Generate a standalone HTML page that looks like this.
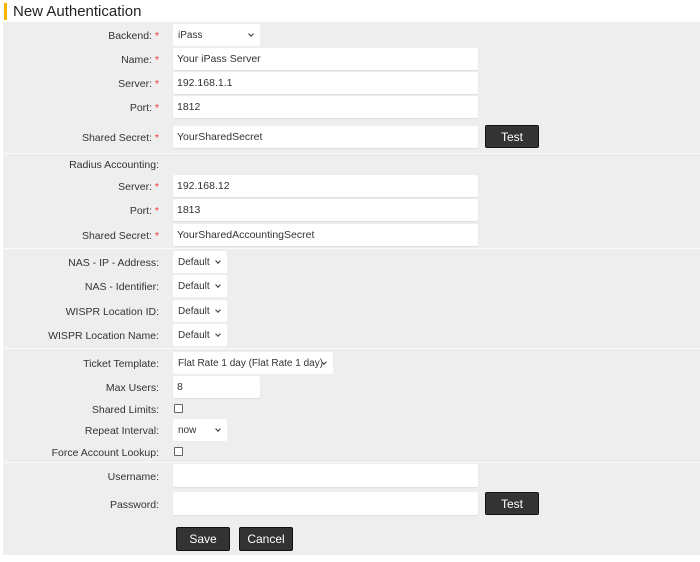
<!DOCTYPE html>
<html><head><meta charset="utf-8"><style>
*{box-sizing:border-box;margin:0;padding:0}
body{width:700px;height:562px;background:#fff;font-family:"Liberation Sans",sans-serif;font-size:10.5px;color:#333;position:relative;overflow:hidden}
.t{position:absolute;left:4px;top:3px;height:17px;border-left:3px solid #f5b400;padding-left:6px;font-size:15px;line-height:17px;color:#222}
.p{position:absolute;left:3px;top:22px;width:697px;height:533px;background:#eee}
.s{position:absolute;left:3px;width:697px;height:1px;background:#fafafa}
.l{position:absolute;right:541px;text-align:right;white-space:nowrap;line-height:12px;transform:translateY(-5px);color:#333}
.l b{color:#e33;font-weight:normal}
.i{position:absolute;left:173px;width:305px;height:22px;background:#fff;border-radius:2px;box-shadow:0 1px 1px #ddd;padding-left:4px;line-height:23px;color:#333;white-space:nowrap}
.sel{position:absolute;left:173px;height:22px;background:#fff;border-radius:2px;padding-left:5px;line-height:23px;white-space:nowrap;overflow:hidden;font-size:10px}
.sel:after{content:"";position:absolute;right:7px;top:8px;width:3px;height:3px;border-right:1px solid #333;border-bottom:1px solid #333;transform:rotate(45deg);background:#fff}
.b{position:absolute;background:#333;color:#fff;border:1px solid #111;border-radius:2px;text-align:center;font-size:12px;line-height:23px}
.c{position:absolute;left:174px;width:9px;height:9px;border:1px solid #666;border-radius:1px;background:#fff}
</style></head><body>
<div class="t">New Authentication</div>
<div class="p"></div>
<div class="s" style="top:153px"></div>
<div class="s" style="top:248px"></div>
<div class="s" style="top:348px"></div>
<div class="s" style="top:462px"></div>

<div class="l" style="top:35px">Backend: <b>*</b></div><div class="sel" style="top:24px;width:87px">iPass</div>
<div class="l" style="top:59px">Name: <b>*</b></div><div class="i" style="top:48px">Your iPass Server</div>
<div class="l" style="top:83px">Server: <b>*</b></div><div class="i" style="top:72px">192.168.1.1</div>
<div class="l" style="top:107px">Port: <b>*</b></div><div class="i" style="top:96px">1812</div>
<div class="l" style="top:137px">Shared Secret: <b>*</b></div><div class="i" style="top:126px">YourSharedSecret</div>
<div class="b" style="left:485px;top:125px;width:54px;height:23px">Test</div>

<div class="l" style="top:164px">Radius Accounting:</div>
<div class="l" style="top:186px">Server: <b>*</b></div><div class="i" style="top:175px">192.168.12</div>
<div class="l" style="top:210px">Port: <b>*</b></div><div class="i" style="top:199px">1813</div>
<div class="l" style="top:235px">Shared Secret: <b>*</b></div><div class="i" style="top:224px">YourSharedAccountingSecret</div>

<div class="l" style="top:262px">NAS - IP - Address:</div><div class="sel" style="top:251px;width:54px">Default</div>
<div class="l" style="top:286px">NAS - Identifier:</div><div class="sel" style="top:275px;width:54px">Default</div>
<div class="l" style="top:311px">WISPR Location ID:</div><div class="sel" style="top:300px;width:54px">Default</div>
<div class="l" style="top:335px">WISPR Location Name:</div><div class="sel" style="top:324px;width:54px">Default</div>

<div class="l" style="top:363px">Ticket Template:</div><div class="sel" style="top:352px;width:160px">Flat Rate 1 day (Flat Rate 1 day)</div>
<div class="l" style="top:387px">Max Users:</div><div class="i" style="top:376px;width:87px">8</div>
<div class="l" style="top:409px">Shared Limits:</div><div class="c" style="top:404px"></div>
<div class="l" style="top:430px">Repeat Interval:</div><div class="sel" style="top:419px;width:54px">now</div>
<div class="l" style="top:452px">Force Account Lookup:</div><div class="c" style="top:447px"></div>

<div class="l" style="top:476px">Username:</div><div class="i" style="top:464px;height:23px"></div>
<div class="l" style="top:504px">Password:</div><div class="i" style="top:492px;height:23px"></div>
<div class="b" style="left:485px;top:492px;width:54px;height:23px">Test</div>

<div class="b" style="left:176px;top:527px;width:54px;height:24px">Save</div>
<div class="b" style="left:239px;top:527px;width:54px;height:24px">Cancel</div>
</body></html>
